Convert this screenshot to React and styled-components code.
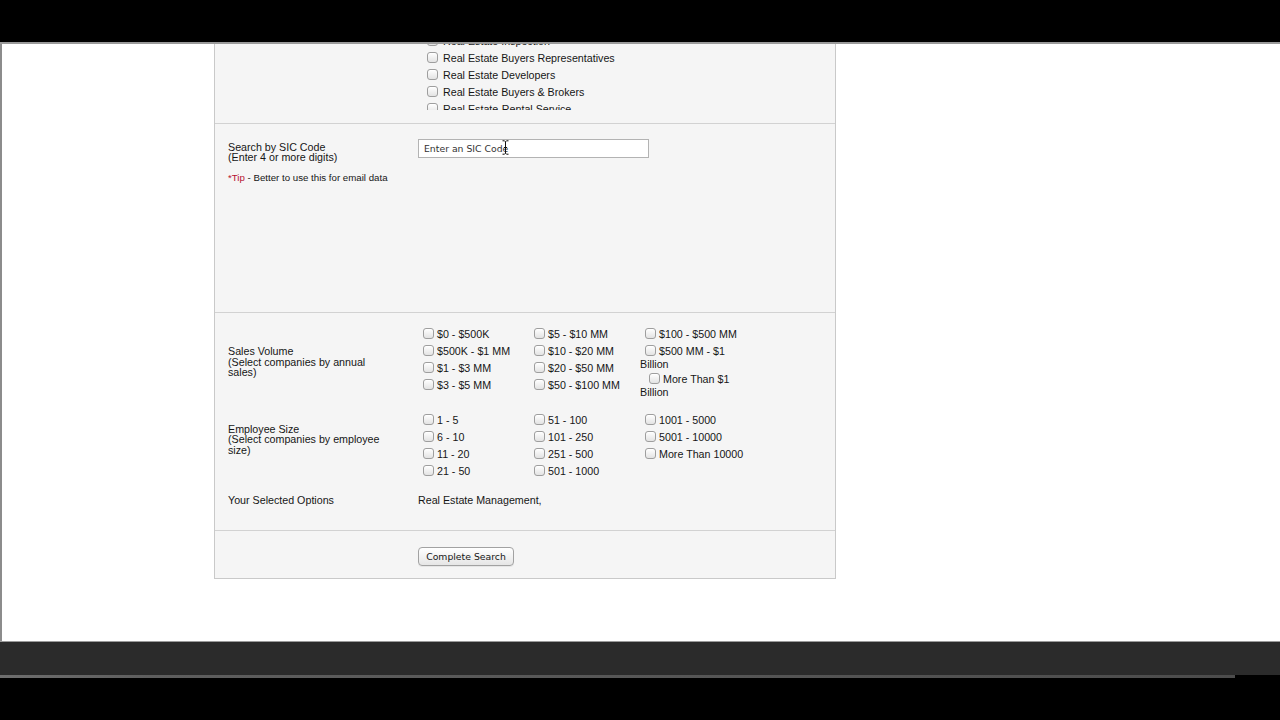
import React from "react";
import styled, { createGlobalStyle } from "styled-components";

const GlobalStyle = createGlobalStyle`
  html, body { margin: 0; padding: 0; background: #000; overflow: hidden; }
  * { box-sizing: border-box; }
`;

const Screen = styled.div`
  width: 1280px;
  height: 720px;
  display: flex;
  flex-direction: column;
  background: #000;
  font-family: "Liberation Sans", Arial, Helvetica, sans-serif;
  color: #161616;
`;

const TopBar = styled.div`
  height: 44px;
  flex-shrink: 0;
  background: #000;
  border-bottom: 2px solid #9a9a9a;
`;

const Viewport = styled.div`
  height: 597px;
  flex-shrink: 0;
  background: #fff;
  border-left: 2px solid #8c8c8c;
  overflow: hidden;
`;

const Panel = styled.div`
  width: 622px;
  margin: -60px 0 0 212px;
  background: #f5f5f5;
  border: 1px solid #c9c9c9;
`;

const Section = styled.div`
  display: flex;
  flex-direction: column;
  padding: ${(p) => p.$pad};
  height: ${(p) => p.$height || "auto"};
  border-bottom: ${(p) => (p.$last ? "none" : "1px solid #d2d2d2")};
`;

const FieldRow = styled.div`
  display: grid;
  grid-template-columns: 190px 1fr;
  margin-top: ${(p) => p.$top || 0}px;
`;

const Label = styled.div`
  font-size: 10.7px;
  line-height: 10.5px;
  padding-top: ${(p) => p.$top || 0}px;
  max-width: 160px;
`;

const Tip = styled.div`
  margin-top: 9.5px;
  font-size: 9.7px;
  line-height: 12px;
`;

const TipMark = styled.span`
  color: #b5122f;
`;

const ListBox = styled.div`
  height: 112px;
  overflow: hidden;
`;

const ListItem = styled.div`
  font-size: 10.7px;
  line-height: 11px;
  white-space: nowrap;
`;

const Check = styled.input.attrs({ type: "checkbox" })`
  appearance: none;
  -webkit-appearance: none;
  width: 11px;
  height: 11px;
  margin: 3px ${(p) => p.$gap || 3}px 3px ${(p) => p.$left || 5}px;
  vertical-align: -4px;
  border: 1px solid #9e9e9e;
  border-radius: 3px;
  background: linear-gradient(#ffffff, #e3e3e3);
  box-shadow: inset 0 1px 0 rgba(255, 255, 255, 0.8);
`;

const OptionGrid = styled.div`
  display: grid;
  grid-template-columns: repeat(3, 111px);
  align-items: start;
`;

const Column = styled.div`
  display: flex;
  flex-direction: column;
`;

const Option = styled.div`
  font-size: 10.7px;
  line-height: 11px;
`;

const InputWrap = styled.div`
  position: relative;
  width: 231px;
  height: 19px;
`;

const TextInput = styled.input`
  width: 231px;
  height: 19px;
  margin: 0;
  padding: 0 0 0 5px;
  border: 1px solid #b3b3b3;
  background: #fff;
  font-family: "DejaVu Sans", "Lucida Grande", sans-serif;
  font-size: 9.3px;
  color: #333;
  outline: none;
  &::placeholder { color: #333; opacity: 1; }
`;

const Cursor = styled.svg`
  position: absolute;
  left: 84px;
  top: 2px;
  pointer-events: none;
`;

const Value = styled.div`
  font-size: 10.7px;
  line-height: 13px;
`;

const Button = styled.button`
  width: 96px;
  height: 19px;
  padding: 0;
  border: 1px solid #a2a2a2;
  border-radius: 4px;
  background: linear-gradient(#ffffff, #e6e6e6);
  font-family: "DejaVu Sans", "Lucida Grande", sans-serif;
  font-size: 9.3px;
  color: #161616;
  box-shadow: 0 1px 0 rgba(0, 0, 0, 0.06);
`;

const BottomBar = styled.div`
  height: 34px;
  flex-shrink: 0;
  background: #2b2b2b;
  border-top: 1px solid #9a9a9a;
`;

const Strip = styled.div`
  height: 3px;
  width: 1235px;
  flex-shrink: 0;
  background: linear-gradient(90deg, #6e6e6e 0%, #5e5e5e 12%, #555 60%, #4c4c4c 100%);
`;

const industries = [
  "Real Estate Agents",
  "Real Estate Management",
  "Real Estate Inspection",
  "Real Estate Buyers Representatives",
  "Real Estate Developers",
  "Real Estate Buyers & Brokers",
  "Real Estate-Rental Service",
  "Real Estate Appraisers",
];

const sales = [
  ["$0 - $500K", "$500K - $1 MM", "$1 - $3 MM", "$3 - $5 MM"],
  ["$5 - $10 MM", "$10 - $20 MM", "$20 - $50 MM", "$50 - $100 MM"],
  ["$100 - $500 MM", "$500 MM - $1 Billion", "More Than $1 Billion"],
];

const employees = [
  ["1 - 5", "6 - 10", "11 - 20", "21 - 50"],
  ["51 - 100", "101 - 250", "251 - 500", "501 - 1000"],
  ["1001 - 5000", "5001 - 10000", "More Than 10000"],
];

function Options({ cols }) {
  return (
    <OptionGrid>
      {cols.map((col, ci) => (
        <Column key={ci}>
          {col.map((label) => (
            <Option key={label}>
              <Check $left={label === "More Than $1 Billion" ? 9 : 5} />
              {label}
            </Option>
          ))}
        </Column>
      ))}
    </OptionGrid>
  );
}

export default function App() {
  return (
    <>
      <GlobalStyle />
      <Screen>
        <TopBar />
        <Viewport>
          <Panel>
            <Section $pad="13px 0 13px 13px">
              <FieldRow>
                <div />
                <ListBox>
                  {industries.map((name) => (
                    <ListItem key={name}>
                      <Check $left={9} $gap={5} />
                      {name}
                    </ListItem>
                  ))}
                </ListBox>
              </FieldRow>
            </Section>

            <Section $pad="14px 0 0 13px" $height="189px">
              <FieldRow>
                <div>
                  <Label $top={3.5}>
                    Search by SIC Code
                    <br />
                    (Enter 4 or more digits)
                  </Label>
                  <Tip>
                    <TipMark>*Tip</TipMark> - Better to use this for email data
                  </Tip>
                </div>
                <InputWrap>
                  <TextInput placeholder="Enter an SIC Code" />
                  <Cursor width="7" height="15" viewBox="0 0 7 15">
                    <path
                      d="M0.5 0.8 H2.5 L3.5 1.8 L4.5 0.8 H6.5 M3.5 1.8 V13.2 M0.5 14.2 H2.5 L3.5 13.2 L4.5 14.2 H6.5 M2 7.5 H5"
                      stroke="#111"
                      strokeWidth="1"
                      fill="none"
                    />
                  </Cursor>
                </InputWrap>
              </FieldRow>
            </Section>

            <Section $pad="12px 0 23px 13px">
              <FieldRow>
                <Label $top={21}>
                  Sales Volume
                  <br />
                  (Select companies by annual sales)
                </Label>
                <Options cols={sales} />
              </FieldRow>
              <FieldRow $top={13}>
                <Label $top={12.75}>
                  Employee Size
                  <br />
                  (Select companies by employee size)
                </Label>
                <Options cols={employees} />
              </FieldRow>
              <FieldRow $top={14.5}>
                <Value>Your Selected Options</Value>
                <Value>Real Estate Management,</Value>
              </FieldRow>
            </Section>

            <Section $pad="15px 0 12px 13px" $last>
              <FieldRow>
                <div />
                <div>
                  <Button type="button">Complete Search</Button>
                </div>
              </FieldRow>
            </Section>
          </Panel>
        </Viewport>
        <BottomBar />
        <Strip />
      </Screen>
    </>
  );
}
